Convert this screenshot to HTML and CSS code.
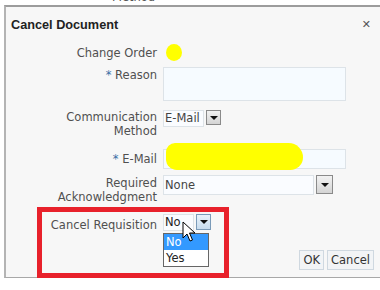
FILE: index.html
```html
<!DOCTYPE html>
<html>
<head>
<meta charset="utf-8">
<link rel="stylesheet" href="styles.css">
</head>
<body>
<div class="strip"><span class="strip-text">Method</span></div>
<div class="dialog">
  <div class="header">
    <span class="title">Cancel Document</span>
    <span class="close">&#x2715;</span>
  </div>
  <div class="form">
    <div class="row r1">
      <div class="label">Change Order</div>
      <div class="field"></div>
    </div>
    <div class="row r2">
      <div class="label"><span class="req">*</span> Reason</div>
      <div class="field"><div class="textarea"></div></div>
    </div>
    <div class="row r3">
      <div class="label two">Communication<br>Method</div>
      <div class="field">
        <div class="select s-email"><span class="val">E-Mail</span></div>
        <span class="btn-arrow"></span>
      </div>
    </div>
    <div class="row r4">
      <div class="label tall"><span class="req">*</span> E-Mail</div>
      <div class="field"><div class="input"></div></div>
    </div>
    <div class="row r5">
      <div class="label two lab5">Required<br>Acknowledgment</div>
      <div class="field">
        <div class="select s-none"><span class="val">None</span></div>
        <span class="btn-arrow big"></span>
      </div>
    </div>
    <div class="row r6">
      <div class="label lab6">Cancel Requisition</div>
      <div class="field">
        <div class="select s-no"><span class="val">No</span></div>
        <span class="btn-arrow sm"></span>
      </div>
    </div>
  </div>
  <div class="footer">
    <button class="btn">OK</button>
    <button class="btn">Cancel</button>
  </div>

  <div class="blob"></div>
  <div class="scribble"></div>
  <div class="list">
    <div class="opt sel">No</div>
    <div class="opt">Yes</div>
  </div>
  <div class="redbox"></div>
  <svg class="cursor" width="14" height="22" viewBox="0 0 14 22"><path d="M1 1 L1 17 L5 13 L8 20 L10.5 19 L7.5 12 L13 12 Z" fill="#fff" stroke="#000" stroke-width="1"/></svg>
</div>
</body>
</html>
```
FILE: styles.css
```css
html, body {
  margin: 0;
  padding: 0;
}
body {
  width: 380px;
  height: 290px;
  background: #ffffff;
  overflow: hidden;
  font-family: "DejaVu Sans", Verdana, sans-serif;
  font-size: 11.5px;
  color: #444;
  position: relative;
}
.strip {
  height: 5px;
  overflow: hidden;
  background: #fff;
  padding-left: 112px;
}
.strip-text {
  display: block;
  margin-top: -9px;
  line-height: 12px;
  color: #555;
}
.dialog {
  position: relative;
  margin-left: 4px;
  width: 374px;
  height: 270px;
  background: #f7f7f7;
  border-top: 2px solid #9c9c9c;
  border-left: 2px solid #b4b4b4;
  border-bottom: 1px solid #a8a8a8;
}
.header {
  height: 35px;
  display: flex;
  justify-content: space-between;
  align-items: center;
  padding: 0 9px 0 5px;
  box-sizing: border-box;
}
.title {
  font-family: "Liberation Sans", Arial, sans-serif;
  font-weight: bold;
  font-size: 12.7px;
  color: #222;
}
.close {
  font-size: 11px;
  color: #555;
  font-weight: bold;
}
.row {
  display: grid;
  grid-template-columns: 151px 1fr;
  column-gap: 6px;
}
.label {
  text-align: right;
  line-height: 16px;
  white-space: nowrap;
  color: #505050;
}
.label.two { line-height: 14px; }
.label.tall { line-height: 20px; }
.lab5 { padding-top: 1px; }
.req { color: #3a6ea5; }
.r1 { margin-top: 3px; height: 16px; }
.r2 { margin-top: 6px; }
.r3 { margin-top: 9px; }
.r4 { margin-top: 11px; }
.r5 { margin-top: 6px; }
.r6 { margin-top: 10px; }
.lab6 { padding-top: 3px; }
.field {
  display: flex;
  align-items: flex-start;
  gap: 2px;
}
.textarea {
  width: 181px;
  height: 32px;
  background: #f6fbff;
  border: 1px solid #dde3e8;
}
.input {
  width: 181px;
  height: 18px;
  background: #f6fbff;
  border: 1px solid #dde3e8;
}
.select {
  height: 15px;
  background: #fafcff;
  border: 1px solid #dde3e8;
  line-height: 15px;
  padding-left: 1px;
  color: #444;
}
.s-email { width: 38px; }
.s-none { width: 148px; height: 18px; line-height: 18px; }
.s-no { width: 28px; color: #222; }
.btn-arrow {
  width: 15px;
  height: 15px;
  box-sizing: border-box;
  border: 1px solid #8a8a8a;
  background: linear-gradient(#f2f2f2, #d4d4d4);
  position: relative;
}
.btn-arrow::after {
  content: "";
  position: absolute;
  left: 3px;
  top: 5px;
  border-left: 4px solid transparent;
  border-right: 4px solid transparent;
  border-top: 4px solid #111;
}
.btn-arrow.big { width: 17px; height: 19px; margin-top: 0; }
.btn-arrow.big::after { left: 4px; top: 7px; }
.btn-arrow.sm { width: 15px; height: 16px; border-color: #7a9ab8; background: linear-gradient(#e8f2fb, #c8dcee); }
.footer {
  display: flex;
  justify-content: flex-end;
  gap: 3px;
  margin-top: 17px;
  padding-right: 6px;
}
.btn {
  height: 20px;
  padding: 0 3px;
  font-family: "DejaVu Sans", Verdana, sans-serif;
  font-size: 11.5px;
  color: #333;
  background: #f2f4f6;
  border: 1px solid #cfd8e0;
  margin: 0;
}
.blob {
  position: absolute;
  left: 160px;
  top: 37px;
  width: 16px;
  height: 17px;
  background: #ffff00;
  border-radius: 50%;
}
.scribble {
  position: absolute;
  left: 160px;
  top: 136px;
  width: 137px;
  height: 27px;
  background: #ffff00;
  border-radius: 10px 16px 14px 12px;
}
.list {
  position: absolute;
  left: 157px;
  top: 226px;
  width: 44px;
  border: 1px solid #666;
  background: #fff;
}
.opt {
  height: 16px;
  line-height: 16px;
  padding-left: 2px;
  color: #222;
}
.opt.sel {
  background: #3399ff;
  color: #fff;
}
.redbox {
  position: absolute;
  left: 31px;
  top: 200px;
  width: 182px;
  height: 61px;
  border: 5px solid #e8212b;
}
.cursor {
  position: absolute;
  left: 176px;
  top: 214px;
}
```
